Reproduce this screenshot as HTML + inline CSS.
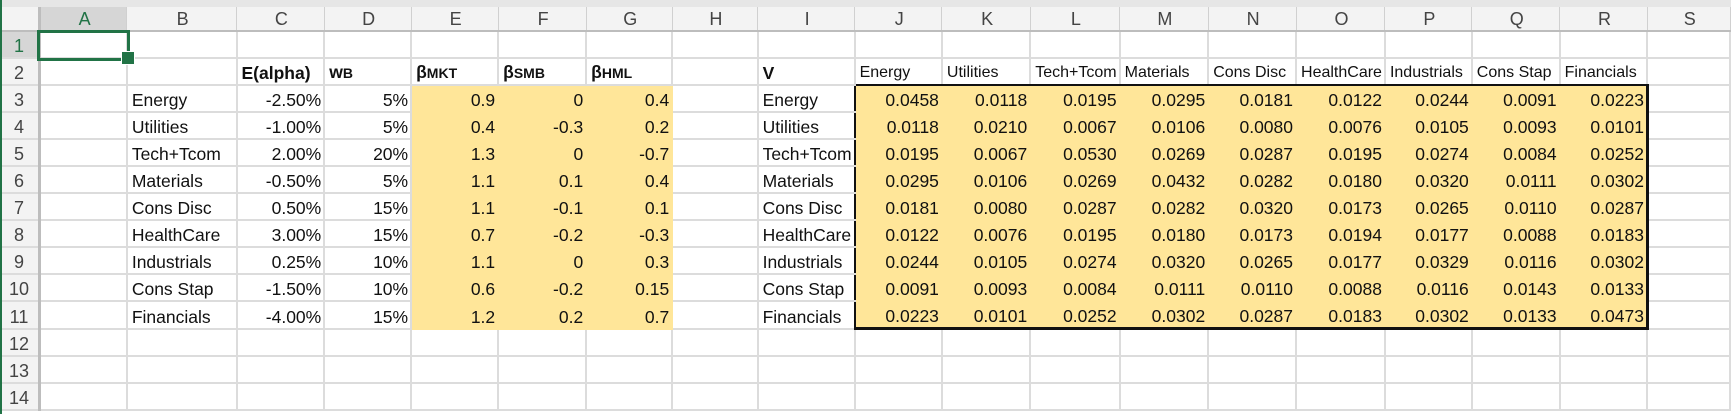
<!DOCTYPE html>
<html><head><meta charset="utf-8"><style>
body{margin:0;width:1731px;height:414px;overflow:hidden;background:#fff;font-family:"Liberation Sans",sans-serif;}
table{border-collapse:collapse;table-layout:fixed;position:absolute;left:0;top:7px;}
td{height:25px;border-right:2px solid #dcdcdc;border-bottom:2px solid #dcdcdc;padding:0 2px 0 4px;font-size:17.5px;color:#111;white-space:nowrap;overflow:hidden;vertical-align:bottom;line-height:22px;}
tr.h td{height:23px;background:#f3f3f3;text-align:center;color:#444;font-size:18px;border-right:1px solid #d0d0d0;border-bottom:2px solid #bdbdbd;vertical-align:middle;}
td.rh{background:#f3f3f3;text-align:center;color:#444;border-right:3px solid #bdbdbd;font-size:18px;padding:0;}
.r{text-align:right}
.y{background:#ffe699;border-color:#ffe699;}
.b{font-weight:bold}
.s{font-size:14px}
.sm td{overflow:visible}
.sm td.t{font-size:16px;overflow:hidden}
</style></head><body>
<div style="position:absolute;left:0;top:0;width:1731px;height:7px;background:#e6e6e6"></div>
<div style="position:absolute;left:0;top:0;width:2px;height:414px;background:#217346;z-index:5"></div>
<table>
<colgroup><col style="width:40px"><col style="width:89px"><col style="width:110px"><col style="width:88px"><col style="width:88px"><col style="width:88px"><col style="width:89px"><col style="width:87px"><col style="width:87px"><col style="width:89px"><col style="width:88px"><col style="width:89px"><col style="width:87px"><col style="width:89px"><col style="width:88px"><col style="width:88px"><col style="width:87px"><col style="width:88px"><col style="width:88px"><col style="width:84px"></colgroup>
<tr class="h"><td style="border-right:3px solid #bdbdbd"></td><td style="background:#d6d6d6;color:#217346;border-bottom:2px solid #217346">A</td><td>B</td><td>C</td><td>D</td><td>E</td><td>F</td><td>G</td><td>H</td><td>I</td><td>J</td><td>K</td><td>L</td><td>M</td><td>N</td><td>O</td><td>P</td><td>Q</td><td>R</td><td>S</td></tr>
<tr><td class="rh" style="background:#d6d6d6;color:#217346">1</td><td></td><td></td><td></td><td></td><td></td><td></td><td></td><td></td><td></td><td></td><td></td><td></td><td></td><td></td><td></td><td></td><td></td><td></td><td></td></tr>
<tr class="sm"><td class="rh">2</td><td></td><td></td><td class="b">E(alpha)</td><td class="b">w<span class="s">B</span></td><td class="b">β<span class="s">MKT</span></td><td class="b">β<span class="s">SMB</span></td><td class="b">β<span class="s">HML</span></td><td></td><td class="b">V</td><td class="t" style="border-bottom:2px solid #111">Energy</td><td class="t" style="border-bottom:2px solid #111">Utilities</td><td class="t" style="border-bottom:2px solid #111">Tech+Tcom</td><td class="t" style="border-bottom:2px solid #111">Materials</td><td class="t" style="border-bottom:2px solid #111">Cons Disc</td><td class="t" style="border-bottom:2px solid #111">HealthCare</td><td class="t" style="border-bottom:2px solid #111">Industrials</td><td class="t" style="border-bottom:2px solid #111">Cons Stap</td><td class="t" style="border-bottom:2px solid #111">Financials</td><td></td></tr>
<tr><td class="rh">3</td><td></td><td>Energy</td><td class="r">-2.50%</td><td class="r">5%</td><td class="r y">0.9</td><td class="r y">0</td><td class="r y">0.4</td><td></td><td style="border-right:2px solid #111">Energy</td><td class="r y">0.0458</td><td class="r y">0.0118</td><td class="r y">0.0195</td><td class="r y">0.0295</td><td class="r y">0.0181</td><td class="r y">0.0122</td><td class="r y">0.0244</td><td class="r y">0.0091</td><td class="r y" style="border-right:3px solid #111">0.0223</td><td></td></tr>
<tr><td class="rh">4</td><td></td><td>Utilities</td><td class="r">-1.00%</td><td class="r">5%</td><td class="r y">0.4</td><td class="r y">-0.3</td><td class="r y">0.2</td><td></td><td style="border-right:2px solid #111">Utilities</td><td class="r y">0.0118</td><td class="r y">0.0210</td><td class="r y">0.0067</td><td class="r y">0.0106</td><td class="r y">0.0080</td><td class="r y">0.0076</td><td class="r y">0.0105</td><td class="r y">0.0093</td><td class="r y" style="border-right:3px solid #111">0.0101</td><td></td></tr>
<tr><td class="rh">5</td><td></td><td>Tech+Tcom</td><td class="r">2.00%</td><td class="r">20%</td><td class="r y">1.3</td><td class="r y">0</td><td class="r y">-0.7</td><td></td><td style="border-right:2px solid #111">Tech+Tcom</td><td class="r y">0.0195</td><td class="r y">0.0067</td><td class="r y">0.0530</td><td class="r y">0.0269</td><td class="r y">0.0287</td><td class="r y">0.0195</td><td class="r y">0.0274</td><td class="r y">0.0084</td><td class="r y" style="border-right:3px solid #111">0.0252</td><td></td></tr>
<tr><td class="rh">6</td><td></td><td>Materials</td><td class="r">-0.50%</td><td class="r">5%</td><td class="r y">1.1</td><td class="r y">0.1</td><td class="r y">0.4</td><td></td><td style="border-right:2px solid #111">Materials</td><td class="r y">0.0295</td><td class="r y">0.0106</td><td class="r y">0.0269</td><td class="r y">0.0432</td><td class="r y">0.0282</td><td class="r y">0.0180</td><td class="r y">0.0320</td><td class="r y">0.0111</td><td class="r y" style="border-right:3px solid #111">0.0302</td><td></td></tr>
<tr><td class="rh">7</td><td></td><td>Cons Disc</td><td class="r">0.50%</td><td class="r">15%</td><td class="r y">1.1</td><td class="r y">-0.1</td><td class="r y">0.1</td><td></td><td style="border-right:2px solid #111">Cons Disc</td><td class="r y">0.0181</td><td class="r y">0.0080</td><td class="r y">0.0287</td><td class="r y">0.0282</td><td class="r y">0.0320</td><td class="r y">0.0173</td><td class="r y">0.0265</td><td class="r y">0.0110</td><td class="r y" style="border-right:3px solid #111">0.0287</td><td></td></tr>
<tr><td class="rh">8</td><td></td><td>HealthCare</td><td class="r">3.00%</td><td class="r">15%</td><td class="r y">0.7</td><td class="r y">-0.2</td><td class="r y">-0.3</td><td></td><td style="border-right:2px solid #111">HealthCare</td><td class="r y">0.0122</td><td class="r y">0.0076</td><td class="r y">0.0195</td><td class="r y">0.0180</td><td class="r y">0.0173</td><td class="r y">0.0194</td><td class="r y">0.0177</td><td class="r y">0.0088</td><td class="r y" style="border-right:3px solid #111">0.0183</td><td></td></tr>
<tr><td class="rh">9</td><td></td><td>Industrials</td><td class="r">0.25%</td><td class="r">10%</td><td class="r y">1.1</td><td class="r y">0</td><td class="r y">0.3</td><td></td><td style="border-right:2px solid #111">Industrials</td><td class="r y">0.0244</td><td class="r y">0.0105</td><td class="r y">0.0274</td><td class="r y">0.0320</td><td class="r y">0.0265</td><td class="r y">0.0177</td><td class="r y">0.0329</td><td class="r y">0.0116</td><td class="r y" style="border-right:3px solid #111">0.0302</td><td></td></tr>
<tr><td class="rh">10</td><td></td><td>Cons Stap</td><td class="r">-1.50%</td><td class="r">10%</td><td class="r y">0.6</td><td class="r y">-0.2</td><td class="r y">0.15</td><td></td><td style="border-right:2px solid #111">Cons Stap</td><td class="r y">0.0091</td><td class="r y">0.0093</td><td class="r y">0.0084</td><td class="r y">0.0111</td><td class="r y">0.0110</td><td class="r y">0.0088</td><td class="r y">0.0116</td><td class="r y">0.0143</td><td class="r y" style="border-right:3px solid #111">0.0133</td><td></td></tr>
<tr><td class="rh">11</td><td></td><td>Financials</td><td class="r">-4.00%</td><td class="r">15%</td><td class="r y">1.2</td><td class="r y">0.2</td><td class="r y">0.7</td><td></td><td style="border-right:2px solid #111">Financials</td><td class="r y" style="border-bottom:3px solid #111">0.0223</td><td class="r y" style="border-bottom:3px solid #111">0.0101</td><td class="r y" style="border-bottom:3px solid #111">0.0252</td><td class="r y" style="border-bottom:3px solid #111">0.0302</td><td class="r y" style="border-bottom:3px solid #111">0.0287</td><td class="r y" style="border-bottom:3px solid #111">0.0183</td><td class="r y" style="border-bottom:3px solid #111">0.0302</td><td class="r y" style="border-bottom:3px solid #111">0.0133</td><td class="r y" style="border-bottom:3px solid #111;border-right:3px solid #111">0.0473</td><td></td></tr>
<tr><td class="rh">12</td><td></td><td></td><td></td><td></td><td></td><td></td><td></td><td></td><td></td><td></td><td></td><td></td><td></td><td></td><td></td><td></td><td></td><td></td><td></td></tr>
<tr><td class="rh">13</td><td></td><td></td><td></td><td></td><td></td><td></td><td></td><td></td><td></td><td></td><td></td><td></td><td></td><td></td><td></td><td></td><td></td><td></td><td></td></tr>
<tr><td class="rh">14</td><td></td><td></td><td></td><td></td><td></td><td></td><td></td><td></td><td></td><td></td><td></td><td></td><td></td><td></td><td></td><td></td><td></td><td></td><td></td></tr>
</table>
<div style="position:absolute;left:37px;top:30px;width:87px;height:25px;border:3px solid #217346;z-index:4"></div>
<div style="position:absolute;left:121px;top:51px;width:12px;height:12px;background:#217346;border:1px solid #fff;z-index:5"></div>
</body></html>
